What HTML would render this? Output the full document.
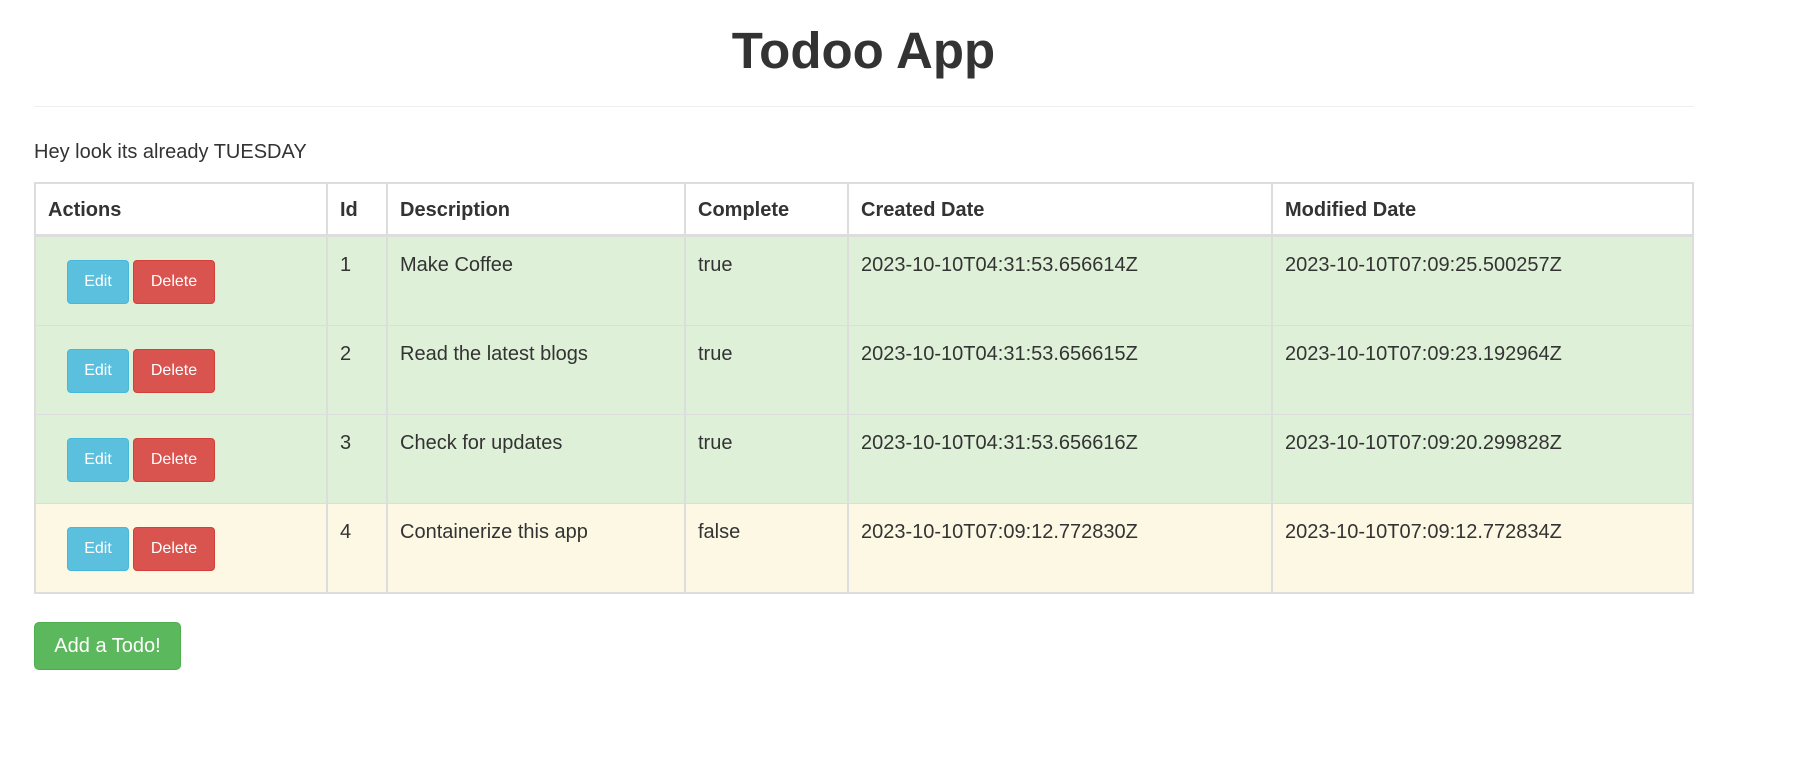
<!DOCTYPE html>
<html><head><style>
body{margin:0;background:#fff;font-family:"Liberation Sans",Helvetica,Arial,sans-serif;color:#333;font-size:20px;width:1800px;height:757px;overflow:hidden;position:relative}
h1{position:absolute;left:0;width:1727px;top:19px;margin:0;text-align:center;font-size:51px;font-weight:bold;line-height:64px}
hr{position:absolute;left:34px;width:1660px;top:106px;margin:0;border:0;border-top:1px solid #eee}
.hey{position:absolute;left:34px;top:141px;line-height:22px}
table{position:absolute;left:34px;top:182px;width:1660px;border-collapse:collapse;table-layout:fixed}
td,th{border:2px solid #ddd;border-width:1px 2px;padding:17px 12px 8px;vertical-align:top;text-align:left;line-height:22px}
th{height:24px;border-bottom:3px solid #ddd;vertical-align:middle;padding-top:14px;padding-bottom:12px}
tr.s td{background:#dff0d8;height:63px}
tr.w td{background:#fcf8e3;height:63px}
table{border:2px solid #ddd}
.b{display:inline-block;color:#fff;font-size:16px;line-height:20px;padding:11px 0;text-align:center;border-radius:4px;margin-top:23px}
.e{background:#5bc0de;border:1px solid #46b8da;width:60px;margin-left:19px}
.d{background:#d9534f;border:1px solid #d43f3a;width:80px;margin-left:4px}
.add{position:absolute;left:34px;top:622px;width:147px;height:48px;box-sizing:border-box;background:#5cb85c;border:1px solid #4cae4c;border-radius:5px;color:#fff;font-size:20px;line-height:46px;text-align:center}
</style></head><body>
<h1>Todoo App</h1>
<hr>
<div class="hey">Hey look its already TUESDAY</div>
<table>
<colgroup><col style="width:292px"><col style="width:60px"><col style="width:298px"><col style="width:163px"><col style="width:424px"><col></colgroup>
<tr><th>Actions</th><th>Id</th><th>Description</th><th>Complete</th><th>Created Date</th><th>Modified Date</th></tr>
<tr class="s"><td style="padding-top:0"><span class="b e">Edit</span><span class="b d">Delete</span></td><td>1</td><td>Make Coffee</td><td>true</td><td>2023-10-10T04:31:53.656614Z</td><td>2023-10-10T07:09:25.500257Z</td></tr>
<tr class="s"><td style="padding-top:0"><span class="b e">Edit</span><span class="b d">Delete</span></td><td>2</td><td>Read the latest blogs</td><td>true</td><td>2023-10-10T04:31:53.656615Z</td><td>2023-10-10T07:09:23.192964Z</td></tr>
<tr class="s"><td style="padding-top:0"><span class="b e">Edit</span><span class="b d">Delete</span></td><td>3</td><td>Check for updates</td><td>true</td><td>2023-10-10T04:31:53.656616Z</td><td>2023-10-10T07:09:20.299828Z</td></tr>
<tr class="w"><td style="padding-top:0"><span class="b e">Edit</span><span class="b d">Delete</span></td><td>4</td><td>Containerize this app</td><td>false</td><td>2023-10-10T07:09:12.772830Z</td><td>2023-10-10T07:09:12.772834Z</td></tr>
</table>
<div class="add">Add a Todo!</div>
</body></html>
